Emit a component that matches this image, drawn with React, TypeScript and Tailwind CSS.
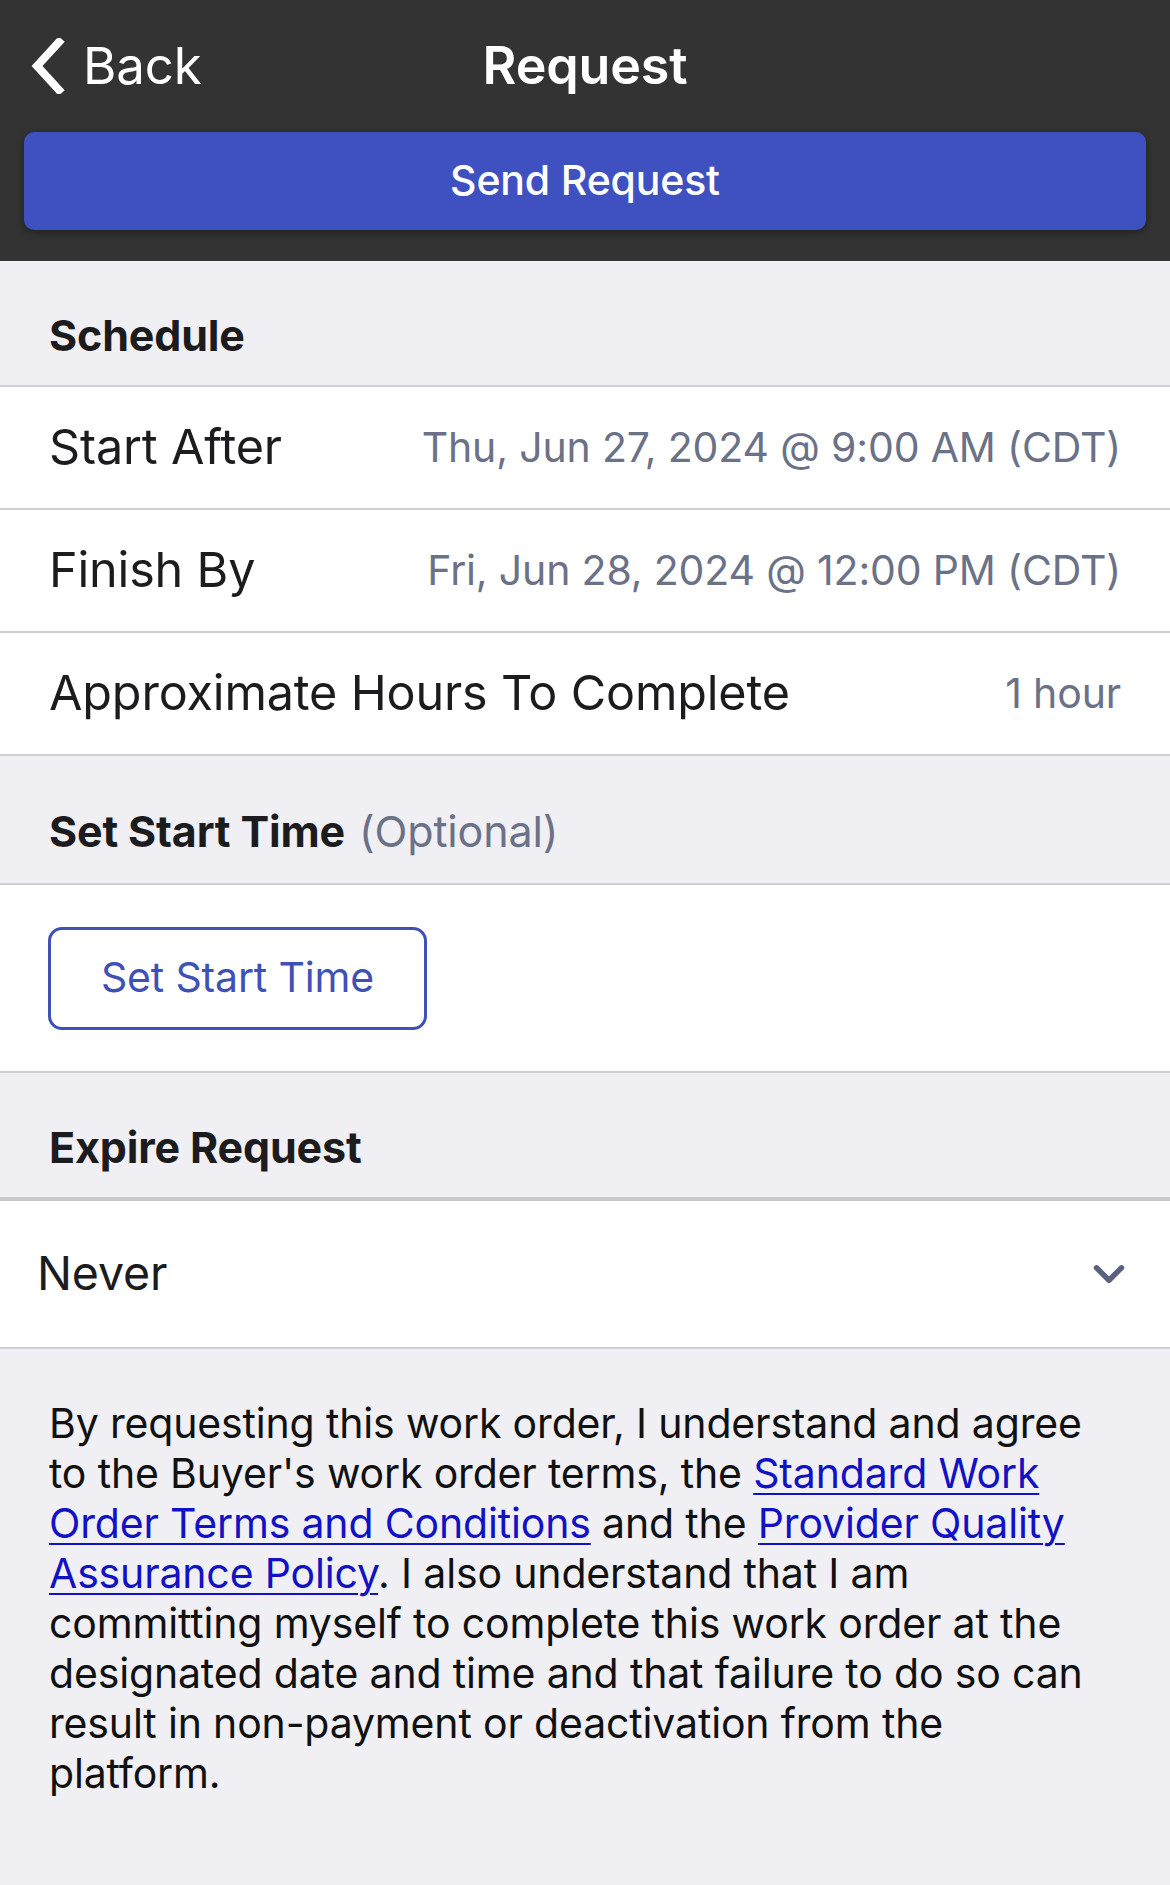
import { ChevronDown } from 'lucide-react';

const scheduleRows = [
  { label: 'Start After', value: 'Thu, Jun 27, 2024 @ 9:00 AM (CDT)' },
  { label: 'Finish By', value: 'Fri, Jun 28, 2024 @ 12:00 PM (CDT)' },
  { label: 'Approximate Hours To Complete', value: '1 hour' },
];

function SectionHeader({ children, className = '' }: { children: React.ReactNode; className?: string }) {
  return (
    <div className={`flex items-center bg-[#efeff4] px-[49px] pt-[24px] text-[43px] font-bold text-[#1c1c1e] ${className}`}>
      {children}
    </div>
  );
}

export default function App() {
  return (
    <div className="min-h-[1885px] w-[1170px] bg-[#efeff4] font-['Inter',sans-serif] tracking-[-0.01em]">
      {/* Nav bar */}
      <header className="h-[261px] bg-[#333333]">
        <div className="grid h-[132px] grid-cols-[1fr_auto_1fr] items-center">
          <div className="flex items-center gap-[18px] pl-[29px] text-white">
            <svg width="36" height="56" viewBox="0 0 36 56" fill="none">
              <path d="M30 4 L8 28 L30 52" stroke="white" strokeWidth="8" strokeLinecap="square" />
            </svg>
            <span className="text-[51px]">Back</span>
          </div>
          <h1 className="text-[52px] font-semibold text-white">Request</h1>
          <div />
        </div>
        <div className="px-[24px]">
          <button className="flex h-[98px] w-full items-center justify-center rounded-[10px] bg-[#3f51c0] text-[41px] font-medium text-white shadow-[0_3px_8px_rgba(0,0,0,0.35)]">
            Send Request
          </button>
        </div>
      </header>

      {/* Schedule */}
      <SectionHeader className="h-[124px]">Schedule</SectionHeader>
      <div className="border-t-2 border-[#cfcfd3] bg-white">
        {scheduleRows.map((row) => (
          <div
            key={row.label}
            className="flex h-[123px] items-center justify-between border-b-2 border-[#cfcfd3] pl-[49px] pr-[49px]"
          >
            <span className="text-[48.5px] text-[#1c1c1e]">{row.label}</span>
            <span className="text-[41px] text-[#6b7186]">{row.value}</span>
          </div>
        ))}
      </div>

      {/* Set start time */}
      <SectionHeader className="h-[127px]">
        Set Start Time
        <span className="ml-[14px] font-normal text-[#6b7186]">(Optional)</span>
      </SectionHeader>
      <div className="flex h-[190px] items-center border-y-2 border-[#cfcfd3] bg-white px-[48px]">
        <button className="h-[103px] w-[379px] rounded-[14px] border-[3px] border-[#3f51b5] text-[41px] text-[#3f51b5]">
          Set Start Time
        </button>
      </div>

      {/* Expire request */}
      <SectionHeader className="h-[124px]">Expire Request</SectionHeader>
      <div className="flex h-[152px] items-center justify-between border-t-4 border-b-2 border-t-[#c8c8c8] border-b-[#cfcfd3] bg-white pl-[37px] pr-[36px]">
        <span className="text-[46.5px] text-[#1c1c1e]">Never</span>
        <ChevronDown className="size-[50px] text-[#5a6080]" strokeWidth={2.6} />
      </div>

      {/* Terms */}
      <p className="pl-[49px] pr-[62px] pt-[49px] text-[41px] leading-[50px] text-[#111111]">
        By requesting this work order, I understand and agree to the Buyer's work order terms, the{' '}
        <a href="#" className="text-[#1212c4] underline decoration-2 underline-offset-[5px]">
          Standard Work Order Terms and Conditions
        </a>{' '}
        and the{' '}
        <a href="#" className="text-[#1212c4] underline decoration-2 underline-offset-[5px]">
          Provider Quality Assurance Policy
        </a>
        . I also understand that I am committing myself to complete this work order at the designated date and
        time and that failure to do so can result in non-payment or deactivation from the platform.
      </p>
    </div>
  );
}
